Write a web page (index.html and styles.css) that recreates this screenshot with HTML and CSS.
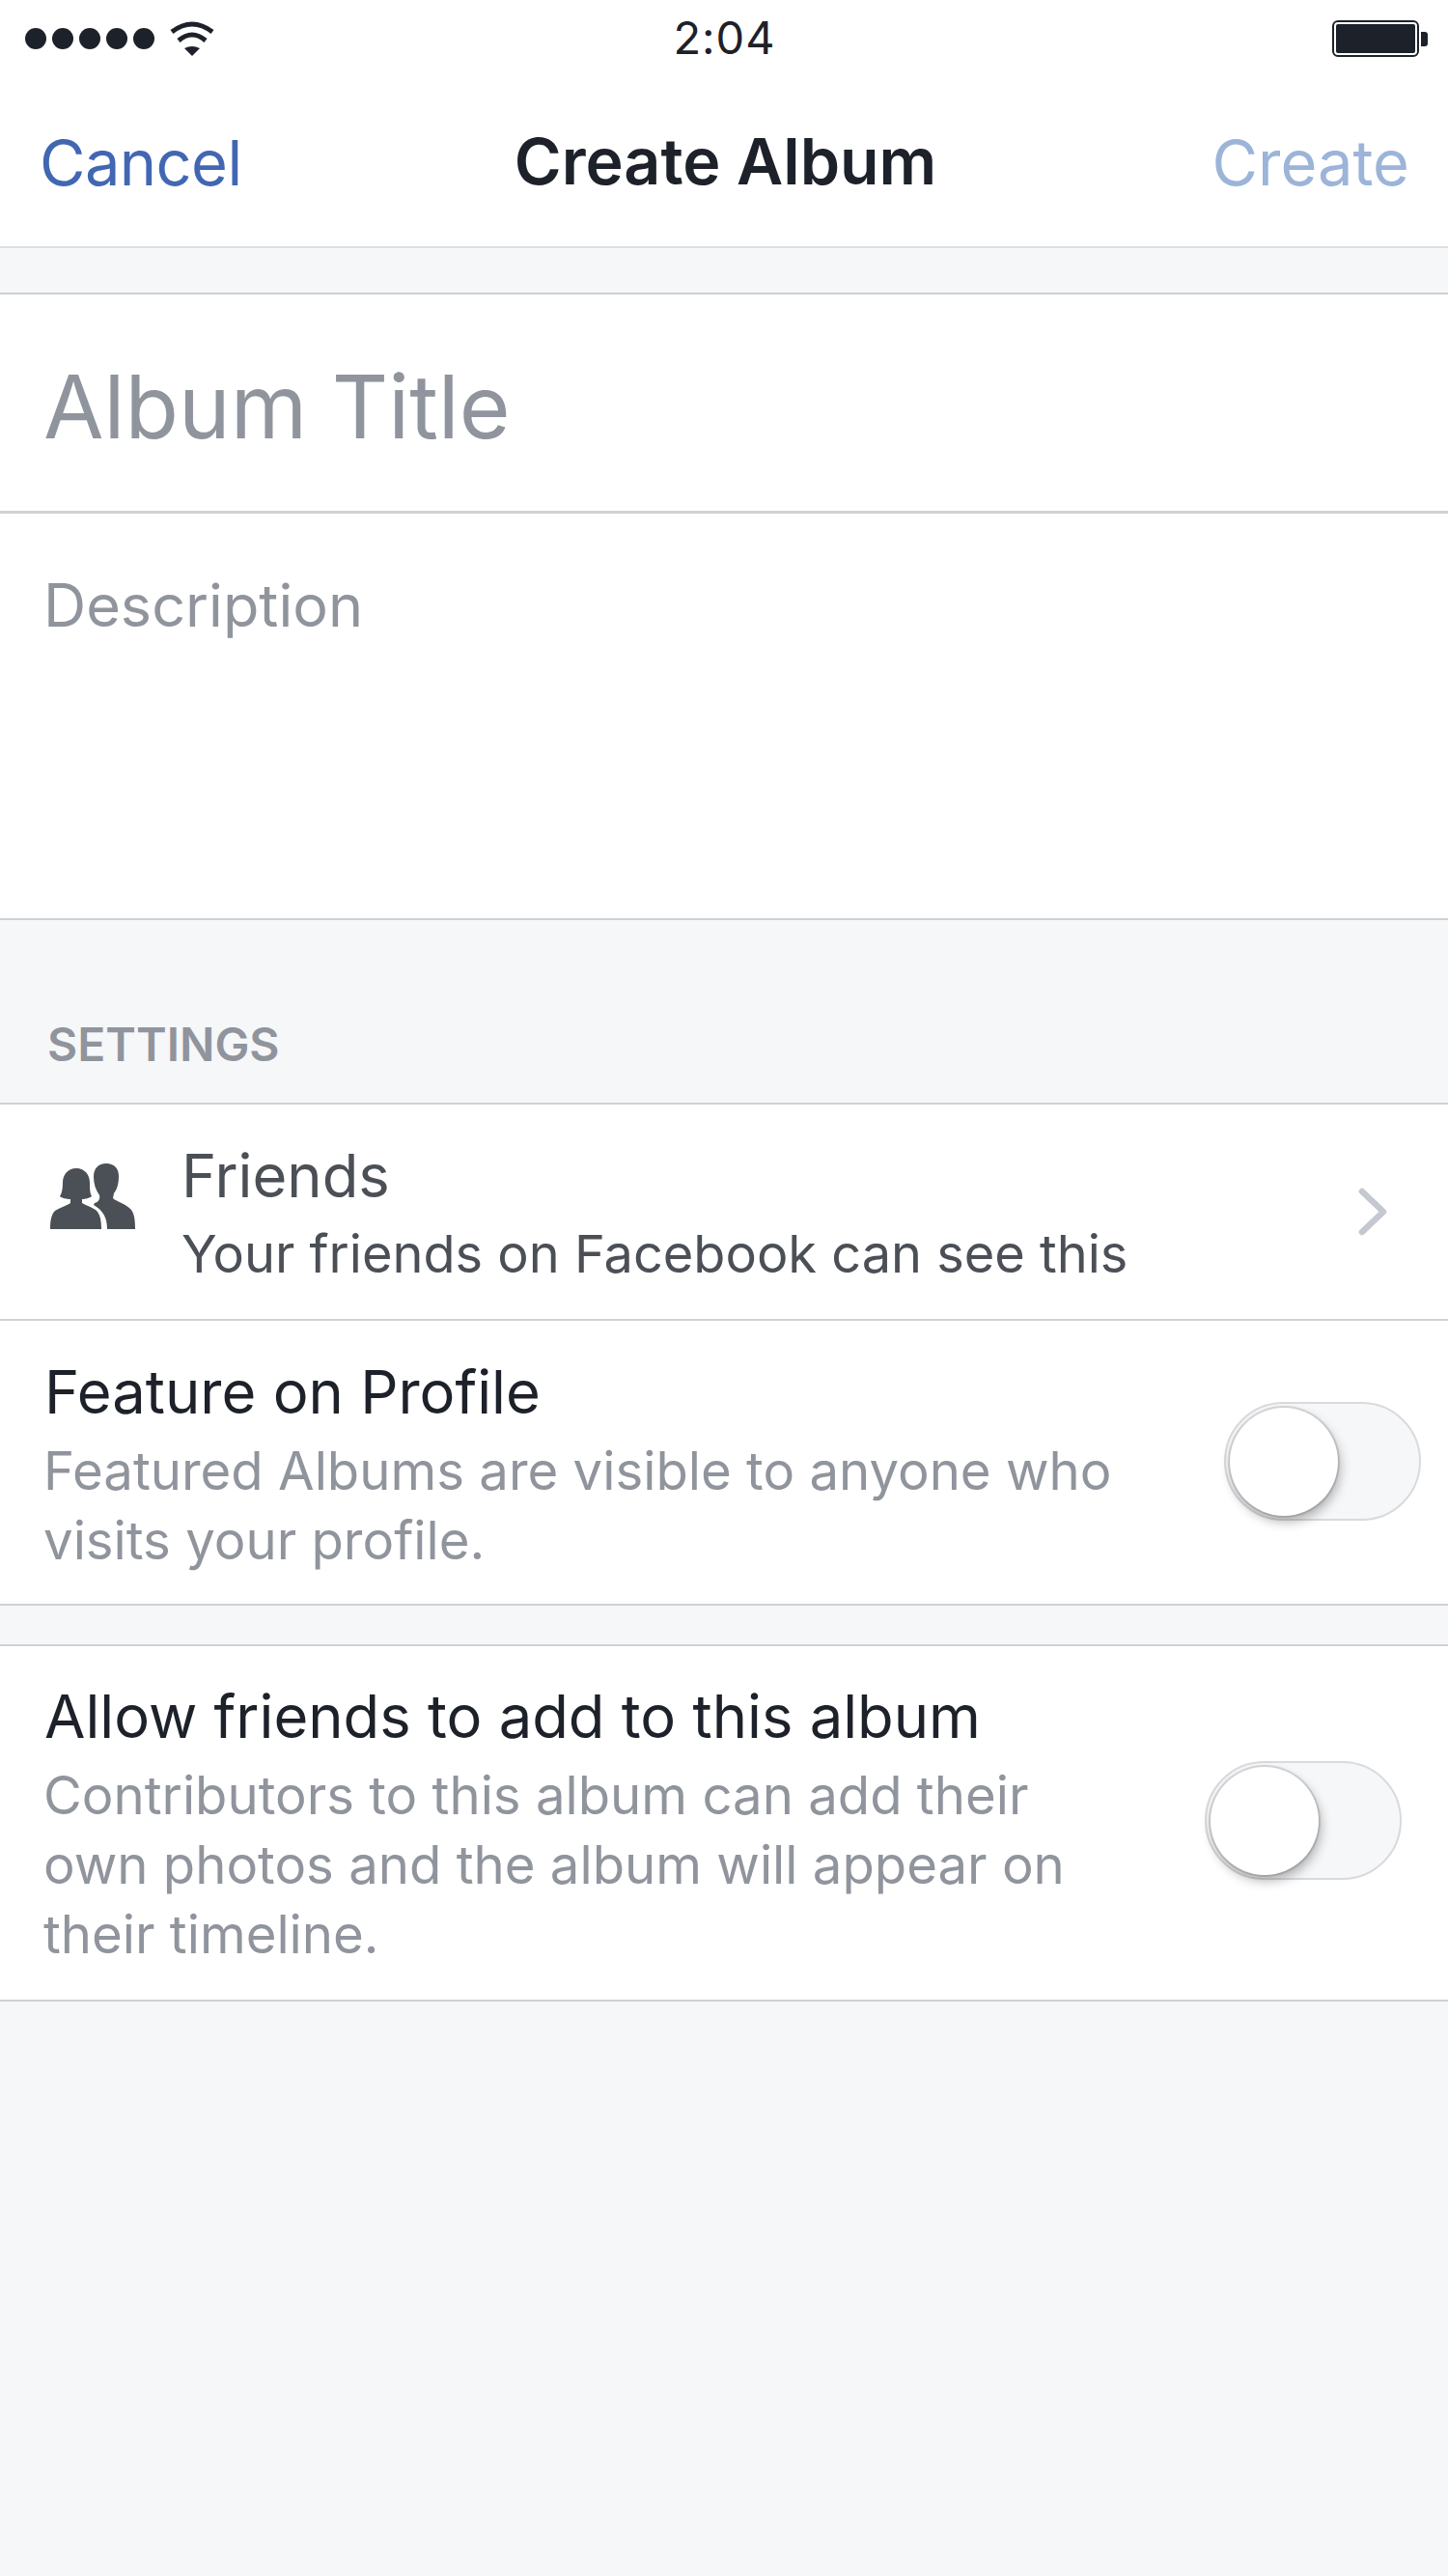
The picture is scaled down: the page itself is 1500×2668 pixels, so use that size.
FILE: index.html
```html
<!DOCTYPE html>
<html lang="en">

<head>
    <meta charset="UTF-8">
    <meta name="viewport" content="width=device-width, initial-scale=1.0">
    <title>Create Album</title>
    <link rel="stylesheet" href="styles.css">
</head>

<body>
    <!-- status bar -->
    <div class="status-bar">
        <div class="status-left">
            <div class="signal">
                <span class="dot"></span><span class="dot"></span><span class="dot"></span><span class="dot"></span><span class="dot"></span>
            </div>
            <svg class="wifi" width="46" height="36" viewBox="0 0 46 36">
                <path d="M2 11Q23 -5 44 11" fill="none" stroke="#1d2129" stroke-width="5"/>
                <path d="M9 20Q23 8 37 20" fill="none" stroke="#1d2129" stroke-width="5"/>
                <path d="M15 28Q23 24 31 28L23 36Z" fill="#1d2129"/>
            </svg>
        </div>
        <div class="clock">2:04</div>
        <div class="battery">
            <div class="battery-body"><div class="battery-fill"></div></div>
            <div class="battery-cap"></div>
        </div>
    </div>

    <!-- nav -->
    <div class="nav">
        <span class="nav-cancel">Cancel</span>
        <span class="nav-title">Create Album</span>
        <span class="nav-create">Create</span>
    </div>

    <div class="gap gap-top"></div>

    <div class="title-row">Album Title</div>
    <div class="desc-row">Description</div>

    <div class="section-label">SETTINGS</div>

    <div class="row friends-row">
        <svg class="friends-icon" width="88" height="68" viewBox="0 0 88 68">
            <path fill="#4b4f56" d="M58 0C66 0 71 5 71 13C71 19 70 26 66 31L65 36C68 39 78 42 83 47C87 51 88 58 88 68H59C59 56 55 49 45 43L46 41C50 40 52 37 51 33C47 27 45 21 45 14C45 5 50 0 58 0Z"/>
            <path fill="#4b4f56" d="M27 5C36 5 41 12 41 20C41 26 41 31 43 34C41 36 36 37 33 37L33 41C36 43 46 46 49 50C52 54 53 60 53 68H0C0 60 1 53 5 49C9 46 17 44 21 41L21 37C17 37 12 36 10 34C12 31 13 26 13 20C13 12 18 5 27 5Z"/>
        </svg>
        <div class="row-text">
            <div class="row-title row-title-muted">Friends</div>
            <div class="row-sub row-sub-dark">Your friends on Facebook can see this</div>
        </div>
        <svg class="chevron" width="30" height="50" viewBox="0 0 30 50">
            <path d="M4 4L26 25L4 46" fill="none" stroke="#c4c9d0" stroke-width="6.500" stroke-linecap="round" stroke-linejoin="round"/>
        </svg>
    </div>

    <div class="row feature-row">
        <div class="row-text">
            <div class="row-title">Feature on Profile</div>
            <div class="row-sub">Featured Albums are visible to anyone who<br>visits your profile.</div>
        </div>
        <div class="switch"><div class="knob"></div></div>
    </div>

    <div class="gap gap-mid"></div>

    <div class="row allow-row">
        <div class="row-text">
            <div class="row-title">Allow friends to add to this album</div>
            <div class="row-sub">Contributors to this album can add their<br>own photos and the album will appear on<br>their timeline.</div>
        </div>
        <div class="switch switch-raised"><div class="knob"></div></div>
    </div>
</body>

</html>
```

FILE: styles.css
```css
body {
    font-family: Inter, "Liberation Sans", sans-serif;
    background-color: #f6f7f9;
    margin: 0;
    padding: 0;
    color: #1d2129;
}

/* status bar */
.status-bar {
    height: 80px;
    background-color: #fff;
    display: grid;
    grid-template-columns: 1fr auto 1fr;
    align-items: center;
    padding: 0 21px 0 26px;
}

.status-left {
    display: flex;
    align-items: center;
    gap: 16px;
}

.signal {
    display: flex;
    gap: 6px;
}

.dot {
    width: 22px;
    height: 22px;
    border-radius: 50%;
    background-color: #1d2129;
}

.clock {
    font-size: 47px;
    font-weight: 400;
    letter-spacing: 1px;
    margin: -3px 4px 0 0;
}

.battery {
    display: flex;
    align-items: center;
    justify-content: flex-end;
}

.battery-body {
    width: 90px;
    height: 38px;
    border: 2px solid #1d2129;
    border-radius: 6px;
    padding: 2px;
    box-sizing: border-box;
}

.battery-fill {
    height: 100%;
    background-color: #1d2129;
    border-radius: 2px;
}

.battery-cap {
    width: 7px;
    height: 15px;
    margin-left: 2px;
    background-color: #1d2129;
    border-radius: 0 3px 3px 0;
}

/* nav */
.nav {
    height: 177px;
    background-color: #fff;
    border-bottom: 2px solid #dddfe2;
    box-sizing: border-box;
    display: flex;
    align-items: center;
    justify-content: space-between;
    padding: 2px 40px 0 41px;
    font-size: 65px;
}

.nav-cancel {
    color: #4267b2;
    font-weight: 400;
    letter-spacing: -0.600px;
}

.nav-title {
    font-size: 66.300px;
    font-weight: 600;
    margin: 0 3px 3px 0;
}

.nav-create {
    color: #9cb4d8;
    font-weight: 400;
}

.gap {
    background-color: #f6f7f9;
    border-bottom: 2px solid #d0d1d5;
}

.gap-top {
    height: 46px;
}

.gap-mid {
    height: 40px;
}

.title-row {
    height: 227px;
    box-sizing: border-box;
    background-color: #fff;
    border-bottom: 3px solid #d0d1d5;
    padding: 61px 45px 0;
    font-size: 90.700px;
    font-weight: 400;
    color: #90949c;
}

.desc-row {
    height: 421px;
    box-sizing: border-box;
    background-color: #fff;
    border-bottom: 2px solid #d0d1d5;
    padding: 58px 45px 0;
    font-size: 61.200px;
    font-weight: 400;
    color: #90949c;
}

.section-label {
    height: 191px;
    box-sizing: border-box;
    padding: 99px 49px 0;
    border-bottom: 2px solid #d0d1d5;
    font-size: 48px;
    font-weight: 600;
    color: #90949c;
}

/* rows */
.row {
    background-color: #fff;
    display: flex;
    align-items: center;
    justify-content: space-between;
    border-bottom: 2px solid #d0d1d5;
    box-sizing: border-box;
    padding-left: 45px;
}

.friends-row {
    height: 224px;
    padding-left: 52px;
    padding-right: 63px;
}

.friends-icon {
    margin: 0 48px 32px 0;
    flex-shrink: 0;
}

.friends-row .row-text {
    flex: 1;
}

.feature-row {
    height: 295px;
    padding-right: 28px;
}

.allow-row {
    height: 368px;
    padding-right: 48px;
}

.row-text {
    padding-top: 6px;
}

.allow-row .row-text {
    padding-top: 3px;
}

.row-title {
    font-size: 61.500px;
    line-height: 80px;
    font-weight: 400;
    margin-top: -3px;
    margin-left: 1px;
    color: #1d2129;
}

.row-title-muted {
    margin-left: 0;
    color: #4b4f56;
}

.row-sub {
    font-size: 54.500px;
    line-height: 72px;
    font-weight: 400;
    margin-top: 5px;
    color: #90949c;
}

.row-sub-dark {
    font-size: 54.100px;
    color: #4b4f56;
}

/* toggle */
.switch {
    width: 204px;
    height: 123px;
    box-sizing: border-box;
    border: 2px solid #d9dadd;
    border-radius: 62px;
    background-color: #f6f7f9;
    position: relative;
    flex-shrink: 0;
    margin-bottom: 3px;
}

.switch-raised {
    margin-bottom: 5px;
}

.knob {
    position: absolute;
    left: 4px;
    top: 4px;
    width: 112px;
    height: 112px;
    border-radius: 50%;
    background-color: #fff;
    box-shadow: 0 0 0 2px rgba(0, 0, 0, 0.12), 2px 6px 12px rgba(0, 0, 0, 0.3);
}
```
